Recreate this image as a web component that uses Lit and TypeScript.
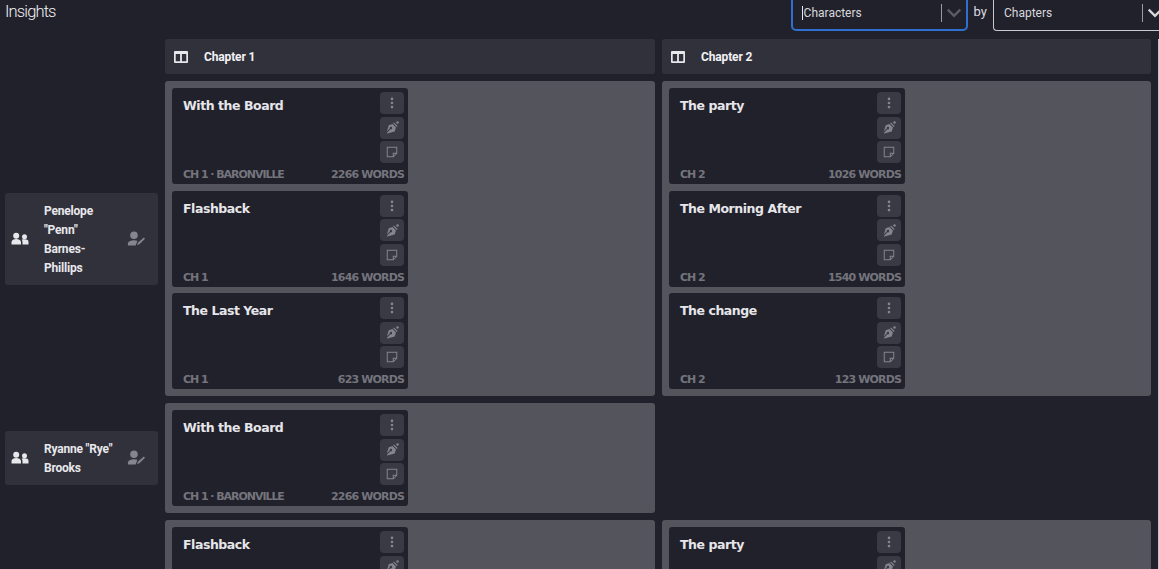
import { LitElement, html, css, svg } from 'lit';
import { customElement } from 'lit/decorators.js';

interface Card {
  title: string;
  meta: string;
  words: string;
}

interface Row {
  name: string[];
  cells: Card[][];
}

const board: Card = { title: 'With the Board', meta: 'CH 1 · BARONVILLE', words: '2266 WORDS' };
const flashback: Card = { title: 'Flashback', meta: 'CH 1', words: '1646 WORDS' };
const lastYear: Card = { title: 'The Last Year', meta: 'CH 1', words: '623 WORDS' };
const party: Card = { title: 'The party', meta: 'CH 2', words: '1026 WORDS' };
const morning: Card = { title: 'The Morning After', meta: 'CH 2', words: '1540 WORDS' };
const change: Card = { title: 'The change', meta: 'CH 2', words: '123 WORDS' };

const rows: Row[] = [
  {
    name: ['Penelope', '"Penn"', 'Barnes-', 'Phillips'],
    cells: [
      [board, flashback, lastYear],
      [party, morning, change],
    ],
  },
  {
    name: ['Ryanne "Rye"', 'Brooks'],
    cells: [[board], []],
  },
  {
    // runs past the bottom of the window, its label is below the fold
    name: [],
    cells: [[flashback], [party]],
  },
];

const dots = svg`<circle cx="12" cy="5" r="2.300"/><circle cx="12" cy="12" r="2.300"/><circle cx="12" cy="19" r="2.300"/>`;
const pen = svg`<circle cx="20" cy="4" r="2"/><path d="M14.300 3.800l5.900 5.900-1.300 1.300-5.900-5.900z"/><path fill-rule="evenodd" d="M12 6.500l5.500 5.500-2 6.200L3.800 21.500l-.9-.9 5.800-5.800a2 2 0 1 0-1.100-1.100l-5.800 5.800z M12 6.500L6 8.500 2.900 18.500z"/>`;
const note = svg`<path fill-rule="evenodd" d="M3 3h18v11.500L14.500 21H3zm1.700 1.700v14.600h8.600V13.300h6V4.700zm10.300 10.300v3.600l3.600-3.600z"/>`;
const people = svg`<circle cx="5.200" cy="5.700" r="3"/><circle cx="13.500" cy="6.700" r="2.500"/><path d="M.5 14.500V12c0-2 2.500-3 4.700-3s4.800 1 4.800 3v2.500zM11.500 14.500V12c0-1-.3-1.700-.9-2.300.8-.3 1.900-.4 2.900-.4 2 0 4 .8 4 2.400v2.800z"/>`;
const personEdit = svg`<circle cx="9.300" cy="7" r="5"/><path d="M1.300 20.500v-2.700c0-2.800 4.800-4.300 8-4.300 1.600 0 3.200.3 4.600.8l-2.400 6.200z"/><path d="M22.500 10l1.500 1.500-7.500 7.500-3 1 1-3z"/>`;
const book = svg`<path fill-rule="evenodd" d="M2 1h12a1 1 0 0 1 1 1v10a1 1 0 0 1-1 1H2a1 1 0 0 1-1-1V2a1 1 0 0 1 1-1zm.700 3v7.300h4.400V4zm6.200 0v7.300h4.400V4z"/>`;
const chevron = svg`<path d="M4.500 8l7.500 7.500L19.500 8" fill="none" stroke="currentColor" stroke-width="2.800"/>`;

@customElement('app-root')
export class AppRoot extends LitElement {
  static styles = css`
    :host {
      display: block;
      position: relative;
      height: 569px;
      overflow: hidden;
      background: #21212b;
      color: #f2f2f4;
      font-family: Roboto, sans-serif;
    }
    svg {
      display: block;
      fill: currentColor;
      flex: none;
    }
    .edge {
      position: absolute;
      top: 39px;
      right: 0;
      bottom: 0;
      width: 1px;
      background: #c4c4ca;
    }
    .topbar {
      display: flex;
      align-items: flex-end;
      height: 31px;
      overflow: hidden;
      padding-left: 5px;
    }
    .page-title {
      align-self: flex-start;
      margin-top: 2px;
      font-size: 16.500px;
      font-weight: 300;
      line-height: 20px;
      letter-spacing: -0.85px;
    }
    .controls {
      display: flex;
      align-items: flex-end;
      margin-left: auto;
      margin-right: -3px;
    }
    .select {
      display: flex;
      align-items: center;
      box-sizing: border-box;
      height: 40px;
      font-size: 12px;
      color: #d8d8dc;
      flex: none;
    }
    .select.focus {
      width: 177px;
      border: 2px solid #2f6fd0;
      border-radius: 5px;
      padding: 3px 0 0 9px;
    }
    .select.plain {
      width: 169px;
      height: 39px;
      border: 1px solid transparent;
      border-bottom-color: #c9c9cf;
      border-left-color: #c9c9cf;
      border-radius: 0 0 0 4px;
      padding: 3px 0 0 10px;
    }
    .select .value {
      flex: 1;
    }
    .focus .value {
      border-left: 1px solid #e8e8e8;
      padding-left: 1px;
    }
    .select .sep {
      width: 1px;
      height: 18px;
      background: #9a9aa0;
    }
    .select .arrow {
      width: 24px;
      display: flex;
      justify-content: center;
      color: #5c5c66;
    }
    .plain .arrow {
      color: #d8d8dc;
      width: 18px;
      justify-content: flex-start;
      padding-left: 2px;
      box-sizing: border-box;
    }
    .by {
      font-size: 13px;
      color: #dcdce0;
      padding: 0 6px;
      margin-bottom: 12px;
    }
    .grid {
      display: grid;
      grid-template-columns: 153px 490px 489px;
      gap: 7px;
      padding: 8px 8px 0 5px;
    }
    .col-head {
      display: flex;
      align-items: center;
      gap: 15px;
      height: 35px;
      padding-left: 8px;
      background: #31313b;
      border-radius: 3px;
      font-size: 12px;
      font-weight: 700;
      letter-spacing: -0.15px;
    }
    .col-head svg {
      color: #e8e8ec;
    }
    .row-head {
      align-self: center;
      display: flex;
      align-items: center;
      box-sizing: border-box;
      padding: 9px 13px 7px 6px;
      background: #31313b;
      border-radius: 3px;
      font-size: 12px;
      font-weight: 700;
      line-height: 19px;
      letter-spacing: -0.2px;
      color: #e8e8ec;
    }
    .row-head svg {
      margin-top: -2px;
    }
    .row-head .name {
      flex: 1;
      margin-left: 15px;
    }
    .row-head .edit {
      color: #85858d;
    }
    .cell {
      display: flex;
      flex-direction: column;
      gap: 6.500px;
      padding: 7px;
      background: #54545c;
      border-radius: 3px;
    }
    .cell.empty {
      background: none;
    }
    .card {
      position: relative;
      box-sizing: border-box;
      width: 236px;
      height: 96px;
      background: #21212b;
      border-radius: 3px;
      padding: 9px 11px 2px;
      display: flex;
      flex-direction: column;
      flex: none;
    }
    .card .title {
      font-family: 'DejaVu Sans', sans-serif;
      font-size: 12.500px;
      font-weight: 700;
      line-height: 17px;
      color: #e6e6ea;
      letter-spacing: -0.45px;
    }
    .card .foot {
      display: flex;
      justify-content: space-between;
      margin-top: auto;
      margin-right: -7px;
      font-family: 'DejaVu Sans', sans-serif;
      font-size: 11px;
      line-height: 14px;
      font-weight: 700;
      letter-spacing: -0.85px;
      color: #74747c;
    }
    .card .meta {
      letter-spacing: -1.05px;
    }
    .actions {
      position: absolute;
      top: 4px;
      right: 4px;
      display: flex;
      flex-direction: column;
      gap: 2.500px;
    }
    .actions span {
      display: flex;
      align-items: center;
      justify-content: center;
      width: 24px;
      height: 22px;
      background: #3a3a44;
      border-radius: 4px;
      color: #85858d;
    }
  `;

  private card(c: Card) {
    return html`
      <div class="card">
        <div class="title">${c.title}</div>
        <div class="actions">
          <span><svg width="14" height="14" viewBox="0 0 24 24">${dots}</svg></span>
          <span><svg width="15" height="15" viewBox="0 0 24 24">${pen}</svg></span>
          <span><svg width="14" height="14" viewBox="0 0 24 24">${note}</svg></span>
        </div>
        <div class="foot"><span class="meta">${c.meta}</span><span>${c.words}</span></div>
      </div>
    `;
  }

  private renderRow(r: Row) {
    return html`
      ${r.name.length
        ? html`
            <div class="row-head">
              <svg width="18" height="18" viewBox="0 0 18 18">${people}</svg>
              <div class="name">${r.name.map((n) => html`<div>${n}</div>`)}</div>
              <svg class="edit" width="18" height="18" viewBox="0 0 24 24">${personEdit}</svg>
            </div>
          `
        : html`<div></div>`}
      ${r.cells.map(
        (cards) => html`
          <div class="cell ${cards.length ? '' : 'empty'}">${cards.map((c) => this.card(c))}</div>
        `
      )}
    `;
  }

  render() {
    return html`
      <div class="topbar">
        <div class="page-title">Insights</div>
        <div class="controls">
          <div class="select focus">
            <span class="value">Characters</span><span class="sep"></span>
            <span class="arrow"><svg width="20" height="20" viewBox="0 0 24 24">${chevron}</svg></span>
          </div>
          <span class="by">by</span>
          <div class="select plain">
            <span class="value">Chapters</span><span class="sep"></span>
            <span class="arrow"><svg width="20" height="20" viewBox="0 0 24 24">${chevron}</svg></span>
          </div>
        </div>
      </div>
      <div class="grid">
        <div></div>
        <div class="col-head"><svg width="16" height="14" viewBox="0 0 16 14">${book}</svg>Chapter 1</div>
        <div class="col-head"><svg width="16" height="14" viewBox="0 0 16 14">${book}</svg>Chapter 2</div>
        ${rows.map((r) => this.renderRow(r))}
      </div>
      <div class="edge"></div>
    `;
  }
}
